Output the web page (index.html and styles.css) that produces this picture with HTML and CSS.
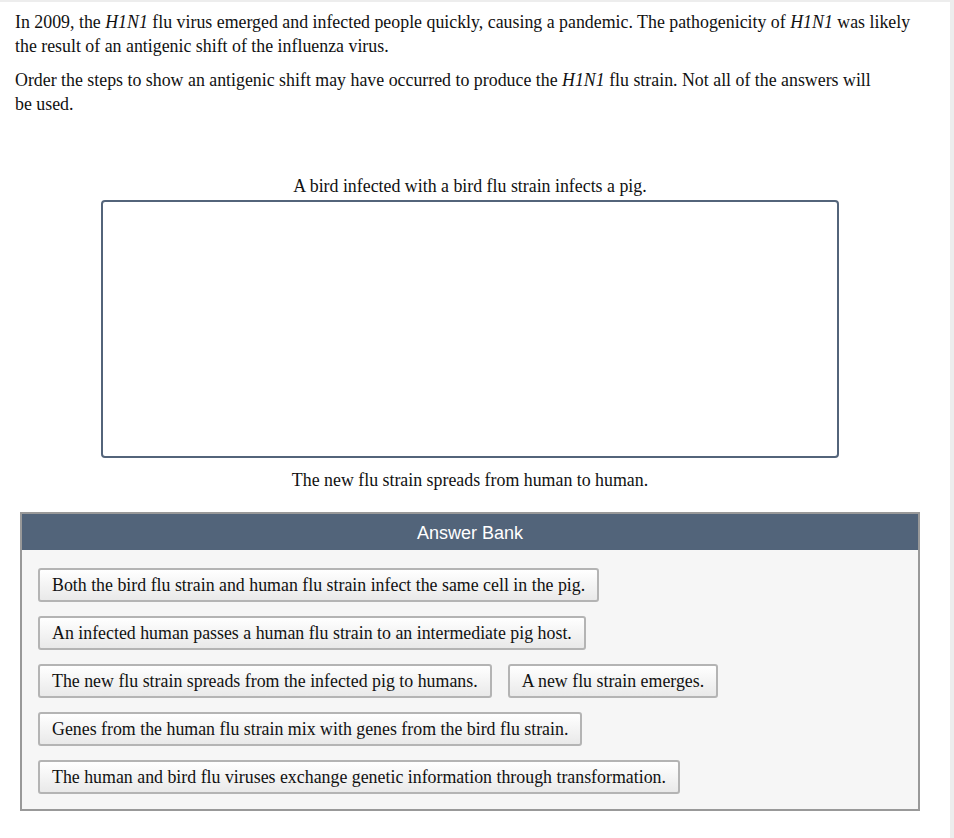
FILE: index.html
```
<!DOCTYPE html>
<html>
<head>
<meta charset="utf-8">
<link rel="stylesheet" href="styles.css">
</head>
<body>
<div class="page">
  <p class="para">In 2009, the <i>H1N1</i> flu virus emerged and infected people quickly, causing a pandemic. The pathogenicity of <i>H1N1</i> was likely the result of an antigenic shift of the influenza virus.</p>
  <p class="para">Order the steps to show an antigenic shift may have occurred to produce the <i>H1N1</i> flu strain. Not all of the answers will<br>be used.</p>
  <div class="question">
    <div class="label label-top">A bird infected with a bird flu strain infects a pig.</div>
    <div class="dropzone"></div>
    <div class="label label-bottom">The new flu strain spreads from human to human.</div>
    <div class="bank">
      <div class="bank-head">Answer Bank</div>
      <div class="bank-body">
        <div class="chip">Both the bird flu strain and human flu strain infect the same cell in the pig.</div>
        <div class="chip">An infected human passes a human flu strain to an intermediate pig host.</div>
        <div class="chip">The new flu strain spreads from the infected pig to humans.</div>
        <div class="chip">A new flu strain emerges.</div>
        <div class="chip">Genes from the human flu strain mix with genes from the bird flu strain.</div>
        <div class="chip">The human and bird flu viruses exchange genetic information through transformation.</div>
      </div>
    </div>
  </div>
</div>
</body>
</html>
```
FILE: styles.css
```
html, body {
  margin: 0;
  padding: 0;
}
body {
  background: #ededed;
  font-family: "Liberation Serif", "Times New Roman", serif;
  font-size: 17.85px;
  color: #111;
}
.page {
  background: #fff;
  width: 950px;
  margin-top: 2px;
  min-height: 836px;
  padding: 8px 0 0 15px;
  box-sizing: border-box;
}
.para {
  margin: 0 0 10px 0;
  width: 905px;
  line-height: 24px;
}
.question {
  width: 900px;
  margin-left: 5px;
  padding-top: 48px;
}
.label {
  text-align: center;
  line-height: 24px;
}
.dropzone {
  width: 734px;
  height: 254px;
  margin: 2px auto 0;
  border: 2px solid #53647a;
  border-radius: 4px;
}
.label-bottom {
  margin-top: 10px;
}
.bank {
  margin-top: 20px;
  border: 2px solid #999;
  background: #f6f6f6;
}
.bank-head {
  background: #52647a;
  color: #fff;
  font-family: "Liberation Sans", Arial, sans-serif;
  font-size: 18px;
  text-align: center;
  height: 36px;
  line-height: 38px;
}
.bank-body {
  display: flex;
  flex-wrap: wrap;
  gap: 14px 16px;
  padding: 18px 16px 15px;
}
.chip {
  box-sizing: border-box;
  border: 2px solid #b4b4b4;
  border-radius: 3px;
  background: linear-gradient(#ffffff, #e9e9e9);
  padding: 0 12px;
  height: 34px;
  line-height: 30px;
  white-space: nowrap;
}
```
